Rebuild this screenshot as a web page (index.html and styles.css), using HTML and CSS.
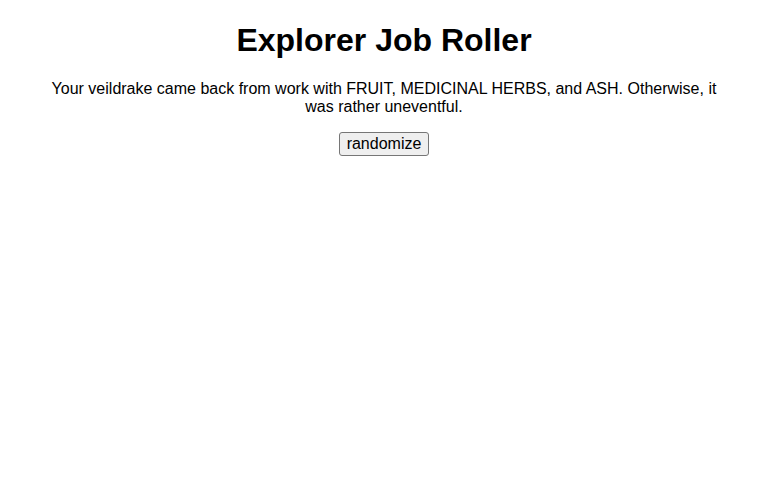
FILE: index.html
```html
<!DOCTYPE html>
<html lang="en">
<head>
<meta charset="utf-8">
<title>Explorer Job Roller</title>
<link rel="stylesheet" href="styles.css">
</head>
<body>
<main class="roller">
  <h1 class="roller-title">Explorer Job Roller</h1>
  <p class="roller-result">Your veildrake came back from work with FRUIT, MEDICINAL HERBS, and ASH. Otherwise, it was rather uneventful.</p>
  <button class="roller-button" type="button">randomize</button>
</main>
</body>
</html>
```
FILE: styles.css
```css
body {
  margin: 8px;
  background: #fff;
  color: #000;
  font-family: "Liberation Sans", Arial, sans-serif;
}

.roller {
  max-width: 680px;
  margin: 0 auto;
  text-align: center;
}

.roller-title {
  font-size: 32px;
  font-weight: bold;
  margin: 14px 0 21px;
}

.roller-result {
  font-size: 16px;
  line-height: 18px;
  margin: 16px 0;
}

.roller-button {
  font-family: "Liberation Sans", Arial, sans-serif;
  font-size: 16px;
  color: #000;
  background: #efefef;
  border: 1px solid #767676;
  border-radius: 3px;
  padding: 2px 7px;
}
```
